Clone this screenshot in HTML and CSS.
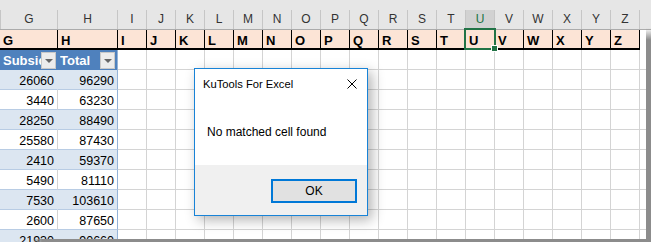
FILE: index.html
```html
<!DOCTYPE html>
<html>
<head>
<meta charset="utf-8">
<link rel="stylesheet" href="styles.css">
</head>
<body>
<div class="frame">
  <div class="colheads">
    <div class="ch c-g">G</div><div class="ch c-h">H</div>
    <div class="ch c">I</div><div class="ch c">J</div><div class="ch c">K</div><div class="ch c">L</div>
    <div class="ch c">M</div><div class="ch c">N</div><div class="ch c">O</div><div class="ch c">P</div>
    <div class="ch c">Q</div><div class="ch c">R</div><div class="ch c">S</div><div class="ch c">T</div>
    <div class="ch c ch-sel">U</div><div class="ch c">V</div><div class="ch c">W</div><div class="ch c">X</div>
    <div class="ch c">Y</div><div class="ch c">Z</div><div class="ch c-rest"></div>
  </div>
  <div class="row1">
    <div class="r1 c-g">G</div><div class="r1 c-h">H</div>
    <div class="r1 c">I</div><div class="r1 c">J</div><div class="r1 c">K</div><div class="r1 c">L</div>
    <div class="r1 c">M</div><div class="r1 c">N</div><div class="r1 c">O</div><div class="r1 c">P</div>
    <div class="r1 c">Q</div><div class="r1 c">R</div><div class="r1 c">S</div><div class="r1 c">T</div>
    <div class="r1 c r1-sel">U<span class="selbox"><span class="handle"></span></span></div><div class="r1 c">V</div><div class="r1 c">W</div><div class="r1 c">X</div>
    <div class="r1 c">Y</div><div class="r1 c">Z</div><div class="r1-rest"></div>
  </div>
  <div class="main">
    <div class="tbl">
      <div class="tr head">
        <div class="th g"><span class="th-text">Subsidy</span><span class="filter"></span></div>
        <div class="th h"><span class="th-text">Total</span><span class="filter"></span></div>
      </div>
      <div class="tr band"><div class="td g">26060</div><div class="td h">96290</div></div>
      <div class="tr"><div class="td g">3440</div><div class="td h">63230</div></div>
      <div class="tr band"><div class="td g">28250</div><div class="td h">88490</div></div>
      <div class="tr"><div class="td g">25580</div><div class="td h">87430</div></div>
      <div class="tr band"><div class="td g">2410</div><div class="td h">59370</div></div>
      <div class="tr"><div class="td g">5490</div><div class="td h">81110</div></div>
      <div class="tr band"><div class="td g">7530</div><div class="td h">103610</div></div>
      <div class="tr"><div class="td g">2600</div><div class="td h">87650</div></div>
      <div class="tr band"><div class="td g">21930</div><div class="td h">90660</div></div>
    </div>
    <div class="blank"></div>
  </div>

  <div class="dialog">
    <div class="dlg-title">
      <span>KuTools For Excel</span>
      <svg class="close" width="10" height="10" viewBox="0 0 10 10"><path d="M0.5 0.5 L9.5 9.5 M9.5 0.5 L0.5 9.5" stroke="#000" stroke-width="1" fill="none"/></svg>
    </div>
    <div class="dlg-body">No matched cell found</div>
    <div class="dlg-foot"><button class="ok">OK</button></div>
  </div>
</div>
</body>
</html>
```
FILE: styles.css
```css
html, body {
  margin: 0;
  padding: 0;
}
body {
  font-family: "Liberation Sans", Arial, sans-serif;
  background: #fff;
}
.frame {
  position: relative;
  width: 651px;
  height: 242px;
  overflow: hidden;
  background: #fff;
}
.frame::before {
  content: "";
  position: absolute;
  right: 0;
  top: 28px;
  bottom: 0;
  width: 5px;
  background: linear-gradient(to bottom, rgba(140,140,140,0), #8c8c8c 12px);
  z-index: 5;
}
.frame::after {
  content: "";
  position: absolute;
  left: 32px;
  right: 0;
  bottom: 0;
  height: 3px;
  background: linear-gradient(to right, rgba(140,140,140,0), #8c8c8c 10px);
  z-index: 5;
}

.c-g { width: 58px; flex: none; }
.c-h { width: 60px; flex: none; }
.c { width: 29px; flex: none; }
.c-rest { flex: 1; }

/* column headers */
.colheads {
  display: flex;
  height: 30px;
  box-sizing: border-box;
  background: #e6e6e6;
  border-bottom: 1px solid #ababab;
}
.ch {
  box-sizing: border-box;
  margin-top: 10px;
  height: 19px;
  border-right: 1px solid #c6c6c6;
  text-align: center;
  font-size: 12px;
  line-height: 19px;
  color: #333;
}
.ch.c-g { border-left: 1px solid #c6c6c6; }
.ch.c-rest { border-right: none; }
.ch-sel {
  background: #d2d2d2;
  color: #217346;
}

/* row 1 */
.row1 {
  display: flex;
  height: 20px;
}
.r1 {
  box-sizing: border-box;
  height: 20px;
  background: #fce4d6;
  border-right: 1px solid #000;
  border-bottom: 2px solid #000;
  padding: 3px 0 0 3px;
  line-height: 16px;
  font-size: 13px;
  font-weight: bold;
  color: #000;
}
.r1-rest { flex: 1; }
.r1-sel { position: relative; }
.selbox {
  position: absolute;
  left: -2px;
  top: -2px;
  right: -2px;
  bottom: -2px;
  border: 2px solid #217346;
  z-index: 3;
}
.handle {
  position: absolute;
  right: -4px;
  bottom: -4px;
  width: 5px;
  height: 5px;
  background: #217346;
  border: 1px solid #fff;
}

/* table area */
.main {
  display: flex;
  height: 192px;
}
.tbl {
  width: 118px;
  flex: none;
}
.tr {
  display: flex;
  height: 20px;
}
.th {
  box-sizing: border-box;
  height: 20px;
  background: #4f81bd;
  color: #fff;
  font-size: 13px;
  font-weight: bold;
  display: flex;
  align-items: center;
  padding-left: 3px;
}
.th.g { width: 58px; }
.th.h { width: 60px; padding-left: 2px; border-right: 1px solid #95b3d7; }
.th-text {
  flex: 1;
  min-width: 0;
  overflow: hidden;
  white-space: nowrap;
}
.filter {
  flex: none;
  position: relative;
  box-sizing: border-box;
  width: 15px;
  height: 17px;
  margin-right: 2px;
  background: #ececec;
  border: 1px solid #c8c8c8;
}
.filter::after {
  content: "";
  position: absolute;
  left: 3px;
  top: 6px;
  border-left: 4px solid transparent;
  border-right: 4px solid transparent;
  border-top: 4px solid #666;
}
.td {
  box-sizing: border-box;
  height: 20px;
  border-bottom: 1px solid #b8cce4;
  text-align: right;
  padding: 2px 3px 0 0;
  line-height: 18px;
  font-size: 12.5px;
  color: #000;
  background: #fff;
}
.td.g { width: 58px; border-right: 1px solid #d4d4d4; }
.td.h { width: 60px; border-right: 1px solid #95b3d7; }
.band .td { background: #dce6f1; }
.band .td.g { border-right-color: #dce6f1; }

.blank {
  flex: 1;
  background-image:
    repeating-linear-gradient(to right, transparent 0 28px, #d4d4d4 28px 29px),
    repeating-linear-gradient(to bottom, transparent 0 19px, #d4d4d4 19px 20px);
}

/* dialog */
.dialog {
  position: absolute;
  left: 194px;
  top: 68px;
  width: 174px;
  height: 148px;
  box-sizing: border-box;
  border: 1px solid #1883d7;
  background: #fff;
  display: flex;
  flex-direction: column;
  box-shadow: 4px 4px 12px rgba(0, 0, 0, 0.3);
  z-index: 4;
  color: #000;
}
.dlg-title {
  height: 30px;
  flex: none;
  display: flex;
  align-items: center;
  justify-content: space-between;
  padding: 0 10px 0 8px;
  font-size: 11.2px;
}
.close { display: block; }
.dlg-body {
  flex: 1;
  display: flex;
  align-items: center;
  padding-left: 12px;
  font-size: 12px;
}
.dlg-foot {
  height: 50px;
  flex: none;
  box-sizing: border-box;
  background: #f0f0f0;
  display: flex;
  justify-content: flex-end;
  align-items: flex-start;
  padding: 14px 10px 0 0;
}
.ok {
  width: 86px;
  height: 24px;
  box-sizing: border-box;
  border: 2px solid #0078d7;
  background: #e1e1e1;
  font-family: "Liberation Sans", Arial, sans-serif;
  font-size: 12px;
  color: #000;
  padding: 0;
  border-radius: 0;
}
```
